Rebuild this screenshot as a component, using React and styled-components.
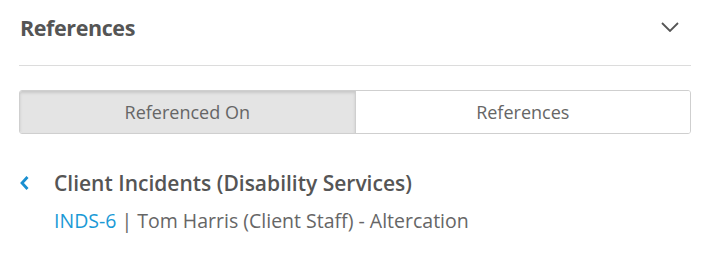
import React, { useState } from "react";
import styled, { createGlobalStyle } from "styled-components";

const GlobalStyle = createGlobalStyle`
  body {
    margin: 0;
    background: #ffffff;
    font-family: "Open Sans", "Liberation Sans", sans-serif;
  }
`;

const tabs = ["Referenced On", "References"];

function App() {
  const [active, setActive] = useState(0);

  return (
    <>
      <GlobalStyle />
      <Panel>
        {/* 헤더 */}
        <Header>
          <Title>References</Title>
          <Toggle aria-label="collapse">
            <svg width="18" height="10" viewBox="0 0 18 10">
              <path d="M1 1 L9 9 L17 1" fill="none" stroke="#555" strokeWidth="1.8" />
            </svg>
          </Toggle>
        </Header>
        <Divider />
        {/* 탭 */}
        <TabGroup>
          {tabs.map((tab, index) => (
            <Tab key={tab} $active={active === index} onClick={() => setActive(index)}>
              {tab}
            </Tab>
          ))}
        </TabGroup>
        {/* 참조 목록 */}
        <RefItem>
          <BackIcon>
            <svg width="11" height="16" viewBox="0 0 11 16">
              <path d="M8.5 2 L3 8 L8.5 14" fill="none" stroke="#1a8fd0" strokeWidth="2.8" />
            </svg>
          </BackIcon>
          <RefBody>
            <RefTitle>Client Incidents (Disability Services)</RefTitle>
            <RefLine>
              <RefCode>INDS-6</RefCode> | Tom Harris (Client Staff) - Altercation
            </RefLine>
          </RefBody>
        </RefItem>
      </Panel>
    </>
  );
}

const Panel = styled.div`
  width: 672px;
  padding: 0 20px 0 19px;
  display: flex;
  flex-direction: column;
`;

const Header = styled.div`
  height: 52px;
  padding-top: 1px;
  display: flex;
  align-items: center;
  justify-content: space-between;
`;

const Title = styled.h2`
  margin: 0 0 0 1px;
  font-size: 21.5px;
  font-weight: 700;
  color: #555555;
  letter-spacing: -0.4px;
`;

const Toggle = styled.button`
  border: none;
  background: none;
  padding: 0;
  margin-right: 12px;
  display: flex;
  cursor: pointer;
`;

const Divider = styled.div`
  height: 1px;
  background-color: #dcdcdc;
  margin-top: 12px;
`;

const TabGroup = styled.div`
  margin-top: 24px;
  height: 42px;
  display: flex;
  border: 1px solid #cfcfcf;
  border-radius: 3px;
  overflow: hidden;
`;

const Tab = styled.div`
  flex: 1;
  display: flex;
  align-items: center;
  justify-content: center;
  font-size: 18px;
  color: #666666;
  cursor: pointer;
  background-color: ${(props) => (props.$active ? "#e4e4e4" : "#ffffff")};
  box-shadow: ${(props) =>
    props.$active ? "inset 0 2px 3px rgba(0, 0, 0, 0.12)" : "none"};
  border-right: 1px solid #cfcfcf;
  &:last-child {
    border-right: none;
  }
`;

const RefItem = styled.div`
  margin-top: 35px;
  display: flex;
  align-items: flex-start;
`;

const BackIcon = styled.div`
  width: 35px;
  padding-top: 6px;
  display: flex;
`;

const RefBody = styled.div`
  display: flex;
  flex-direction: column;
`;

const RefTitle = styled.div`
  font-size: 21px;
  font-weight: 600;
  color: #555555;
  line-height: 28px;
`;

const RefLine = styled.div`
  margin-top: 10px;
  font-size: 19.5px;
  color: #666666;
  line-height: 28px;
`;

const RefCode = styled.span`
  color: #1a9ad6;
`;

export default App;
